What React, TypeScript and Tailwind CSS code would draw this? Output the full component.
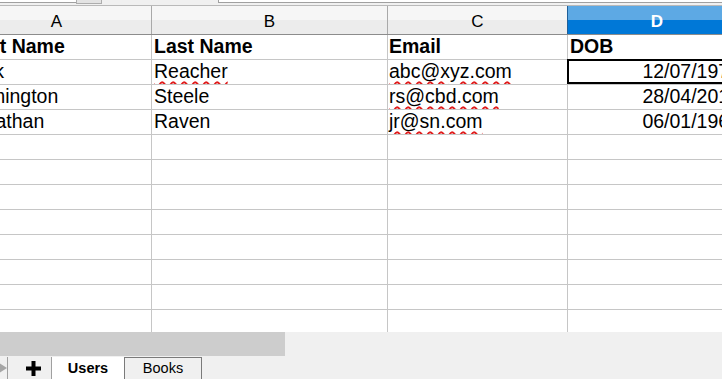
import React from "react";

const data: string[][] = [
  ["First Name", "Last Name", "Email", "DOB"],
  ["Jack", "Reacher", "abc@xyz.com", "12/07/1970"],
  ["Remington", "Steele", "rs@cbd.com", "28/04/2012"],
  ["Jonathan", "Raven", "jr@sn.com", "06/01/1968"],
];

const wavy = "underline decoration-wavy decoration-[#e01b1b] decoration-[1.5px] underline-offset-[3px]";

function Row({ r, idx }: { r: string[] | null; idx: number }) {
  const bold = idx === 0;
  const t = bold ? "font-bold" : "";
  return (
    <div className="flex h-[25px] border-b border-[#c6c6c6]">
      <div className={`w-[190px] shrink-0 border-r border-[#c6c6c6] pl-[2px] leading-[23px] whitespace-nowrap overflow-hidden ${t}`}>
        {r ? r[0] : ""}
      </div>
      <div className={`w-[236px] shrink-0 border-r border-[#c6c6c6] pl-[2px] leading-[23px] whitespace-nowrap overflow-hidden ${t}`}>
        {r ? <span className={idx === 1 ? wavy : ""}>{r[1]}</span> : ""}
      </div>
      <div className={`w-[180px] shrink-0 border-r border-[#c6c6c6] pl-[1px] leading-[23px] whitespace-nowrap overflow-hidden ${t}`}>
        {r ? <span className={idx > 0 ? wavy : ""}>{r[2]}</span> : ""}
      </div>
      <div className={`relative w-[178px] shrink-0 leading-[23px] whitespace-nowrap ${bold ? "text-left pl-[2px] font-bold" : "text-right pr-[6px]"}`}>
        {r ? r[3] : ""}
        {idx === 1 && (
          <div className="absolute left-[-1px] top-[-1px] w-[200px] h-[25px] border-2 border-black" />
        )}
      </div>
    </div>
  );
}

export default function App() {
  const rows: (string[] | null)[] = [];
  for (let i = 0; i < 12; i++) rows.push(i < data.length ? data[i] : null);
  return (
    <div className="w-[722px] h-[379px] overflow-hidden bg-[#f0f0f0] flex flex-col font-['Liberation_Sans',Arial,sans-serif] text-black">
      {/* top strip */}
      <div className="h-[6px] shrink-0 flex items-start border-b border-[#b9b9b9] bg-[#f0f0f0]">
        <div className="w-[76px] h-[3px] bg-white border-b border-[#a0a0a0]" />
        <div className="w-[26px] h-[4px] bg-[#e3e3e3] border-x border-b border-[#adadad]" />
        <div className="w-[116px]" />
        <div className="flex-1 h-[3px] bg-white border-l border-b border-[#a0a0a0]" />
      </div>

      {/* grid */}
      <div className="h-[326px] shrink-0 overflow-hidden bg-white">
        <div className="ml-[-38px] w-max flex flex-col text-[19.5px]">
          {/* column header */}
          <div className="flex h-[29px] border-b border-[#8c8c8c] text-[17px]">
            <div className="w-[190px] shrink-0 border-r border-[#a9a9a9] bg-[linear-gradient(#f6f6f6_0,#f6f6f6_50%,#ececec_50%,#ececec_100%)] flex items-center justify-center pt-[3px]">
              A
            </div>
            <div className="w-[236px] shrink-0 border-r border-[#a9a9a9] bg-[linear-gradient(#f6f6f6_0,#f6f6f6_50%,#ececec_50%,#ececec_100%)] flex items-center justify-center pt-[3px]">
              B
            </div>
            <div className="w-[180px] shrink-0 border-r border-[#1f5f99] bg-[linear-gradient(#f6f6f6_0,#f6f6f6_50%,#ececec_50%,#ececec_100%)] flex items-center justify-center pt-[3px]">
              C
            </div>
            <div className="w-[178px] shrink-0 bg-[linear-gradient(#5da9e4_0,#5da9e4_50%,#0078d7_50%,#0078d7_100%)] flex items-center justify-center pt-[3px] text-white font-bold">
              D
            </div>
          </div>
          {rows.map((r, i) => (
            <Row key={i} r={r} idx={i} />
          ))}
        </div>
      </div>

      {/* horizontal scroll */}
      <div className="h-[24px] shrink-0 flex">
        <div className="w-[285px] bg-[#cdcdcd]" />
        <div className="flex-1 bg-[#f0f0f0]" />
      </div>

      {/* sheet tabs */}
      <div className="h-[23px] shrink-0 flex items-stretch pt-[1px] text-[14.5px]">
        <div className="w-[7px] flex items-center overflow-hidden">
          <svg width="7" height="14" viewBox="0 0 7 14">
            <polygon points="-4,0 7,7 -4,14" fill="#a6a6a6" />
          </svg>
        </div>
        <div className="w-[1px] bg-[#a0a0a0]" />
        <div className="w-[43px] flex items-center justify-start pl-[18px]">
          <svg width="15" height="15" viewBox="0 0 15 15">
            <rect x="5.5" y="0" width="4" height="15" fill="#000" />
            <rect x="0" y="5.5" width="15" height="4" fill="#000" />
          </svg>
        </div>
        <div className="w-[1px] bg-[#a0a0a0]" />
        <div className="w-[72px] bg-white flex items-center justify-center font-bold pt-[1px]">Users</div>
        <div className="w-[78px] border-t border-x border-[#7a7a7a] bg-[#f0f0f0] flex items-center justify-center pt-[1px]">
          Books
        </div>
      </div>
    </div>
  );
}
